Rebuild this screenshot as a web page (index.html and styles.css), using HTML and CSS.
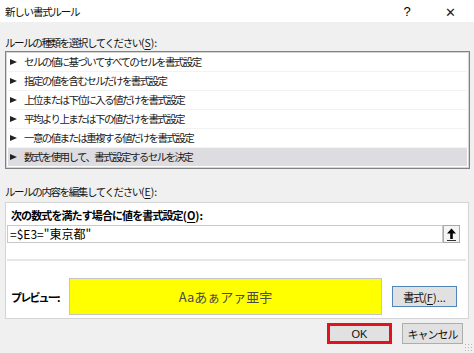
FILE: index.html
```html
<!DOCTYPE html>
<html lang="ja">
<head>
  <meta charset="UTF-8">
  <title>新しい書式ルール</title>
  <link rel="stylesheet" href="styles.css">
</head>
<body>
  <div class="dialog">
    <div class="titlebar">
      <span class="title">新しい書式ルール</span>
      <span class="help">?</span>
      <span class="close">✕</span>
    </div>

    <div class="body">
      <div class="label label-first">ルールの種類を選択してください<span class="key">(<u>S</u>):</span></div>
      <ul class="rule-list">
        <li>セルの値に基づいてすべてのセルを書式設定</li>
        <li>指定の値を含むセルだけを書式設定</li>
        <li>上位または下位に入る値だけを書式設定</li>
        <li>平均より上または下の値だけを書式設定</li>
        <li>一意の値または重複する値だけを書式設定</li>
        <li class="selected">数式を使用して、書式設定するセルを決定</li>
      </ul>

      <div class="label label-second">ルールの内容を編集してください<span class="key">(<u>E</u>):</span></div>
      <div class="panel">
        <div class="panel-title">次の数式を満たす場合に値を書式設定<span class="key">(<u>O</u>):</span></div>
        <div class="formula-row">
          <div class="formula">=$E3="東京都"</div>
          <div class="ref-btn">
            <svg width="11" height="13" viewBox="0 0 11 13">
              <path d="M5.5 0.5 L1 5.5 H4.2 V11 H6.8 V5.5 H10 Z" fill="#000"/>
              <rect x="1" y="12" width="9" height="1" fill="#333"/>
            </svg>
          </div>
        </div>
        <div class="divider"></div>
        <div class="preview-row">
          <span class="preview-label">プレビュー:</span>
          <div class="preview-box">Aaあぁアァ亜宇</div>
          <button class="btn btn-format">書式<span class="key">(<u>F</u>)...</span></button>
        </div>
      </div>

      <div class="footer">
        <button class="btn btn-ok">OK</button>
        <button class="btn btn-cancel">キャンセル</button>
      </div>
    </div>
    <div class="grip"></div>
  </div>
</body>
</html>
```

FILE: styles.css
```css
html, body {
  margin: 0;
  padding: 0;
}
body {
  font-family: "Noto Sans CJK JP", "Noto Sans", sans-serif;
  font-size: 11px;
  letter-spacing: -1px;
  color: #000;
  background-color: #f0f0f0;
}
.dialog {
  width: 474px;
  height: 353px;
  position: relative;
  overflow: hidden;
}
.titlebar {
  height: 22px;
  background-color: #fff;
  display: flex;
  align-items: center;
  padding-left: 5px;
}
.title {
  flex: 1;
  font-size: 10.5px;
  letter-spacing: -1.2px;
  color: #111;
}
.help {
  width: 12px;
  text-align: center;
  font-family: "Liberation Sans", sans-serif;
  font-size: 13px;
  letter-spacing: 0;
  margin-right: 32px;
}
.close {
  width: 14px;
  font-size: 13px;
  letter-spacing: 0;
  margin-right: 15px;
  color: #222;
}
.body {
  padding: 0 5px 0 5px;
}
.key {
  letter-spacing: 0;
}
.label {
  height: 17px;
  line-height: 17px;
  font-size: 10.5px;
  letter-spacing: -1.4px;
  color: #111;
}
.label-first {
  padding-top: 12px;
}
.label-second {
  margin-top: 14px;
  margin-bottom: 2px;
}
.label u, .panel-title u, .btn u {
  text-underline-offset: 2px;
}
.rule-list {
  list-style: none;
  margin: 0;
  padding: 1px 2px 1px 1px;
  width: 460px;
  height: 114px;
  background-color: #fff;
  border: 1px solid #828282;
  box-shadow: inset 0 0 0 1px #d4d4d4;
}
.rule-list li {
  height: 18px;
  line-height: 18px;
  padding-left: 16px;
  position: relative;
  border-bottom: 1px solid #f2f2f2;
  margin-left: 1px;
  font-size: 10.5px;
  letter-spacing: -1.6px;
  color: #1a1a1a;
}
.rule-list li::before {
  content: "";
  position: absolute;
  left: 2px;
  top: 6px;
  width: 0;
  height: 0;
  border-left: 7px solid #222;
  border-top: 3px solid transparent;
  border-bottom: 3px solid transparent;
}
.rule-list li.selected {
  background-color: #dcdce1;
  border-bottom: none;
}
.panel {
  width: 462px;
  height: 115px;
  background-color: #fff;
  border: 1px solid #d5d5d5;
}
.panel-title {
  font-weight: bold;
  height: 17px;
  line-height: 17px;
  padding: 4px 0 0 5px;
  font-size: 11px;
  letter-spacing: -0.9px;
}
.formula-row {
  display: flex;
  margin: 1px 0 0 1px;
}
.formula {
  width: 432px;
  height: 16px;
  line-height: 16px;
  border: 1px solid #c8c8c8;
  padding-left: 2px;
  font-size: 12px;
  letter-spacing: 0;
}
.ref-btn {
  width: 15px;
  height: 16px;
  border: 1px solid #a8a8a8;
  background-color: #f4f4f4;
  display: flex;
  align-items: center;
  justify-content: center;
}
.divider {
  height: 2px;
  background-color: #e6e6e6;
  margin: 16px 2px 0 1px;
}
.preview-row {
  display: flex;
  align-items: center;
  margin-top: 17px;
}
.preview-label {
  font-weight: bold;
  width: 58px;
  padding-left: 5px;
  white-space: nowrap;
  letter-spacing: -1.8px;
}
.preview-box {
  width: 311px;
  height: 35px;
  line-height: 35px;
  background-color: #ffff00;
  border: 1px solid #c4c4c4;
  text-align: center;
  font-size: 13px;
  letter-spacing: 0;
  color: #4a4a4a;
}
.btn {
  font-family: "Noto Sans CJK JP", "Noto Sans", sans-serif;
  font-size: 11px;
  letter-spacing: -1px;
  color: #111;
  background-color: #e1e1e1;
  border: 1px solid #adadad;
  padding: 0;
  margin: 0;
  white-space: nowrap;
}
.btn-format {
  width: 65px;
  height: 21px;
  margin-left: 10px;
  border: 1px solid #4f88b8;
  box-shadow: inset 0 0 0 1px #d6e4ef;
}
.footer {
  display: flex;
  justify-content: flex-end;
  gap: 10px;
  padding: 4px 6px 0 0;
}
.btn-ok {
  width: 65px;
  height: 21px;
  border: 3px solid #e0141e;
  background-color: #e1e1e1;
  font-family: "Liberation Sans", sans-serif;
  letter-spacing: 0;
}
.btn-cancel {
  width: 61px;
  height: 21px;
}
.grip {
  position: absolute;
  right: 2px;
  bottom: 2px;
  width: 8px;
  height: 8px;
  background-image: radial-gradient(circle, #b8b8b8 0.8px, transparent 1px);
  background-size: 3px 3px;
}
```
